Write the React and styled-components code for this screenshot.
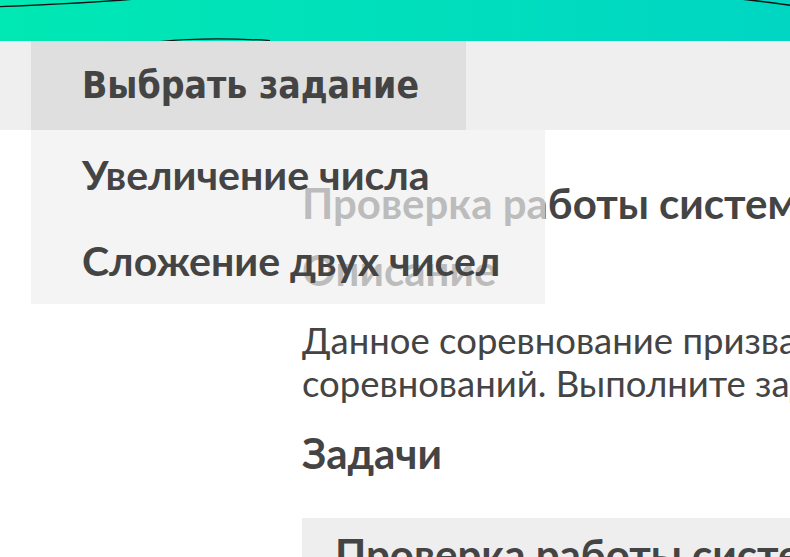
import React from 'react';
import styled, { createGlobalStyle } from 'styled-components';

const GlobalStyle = createGlobalStyle`
  html, body {
    margin: 0;
    padding: 0;
    overflow: hidden;
    background: #ffffff;
  }
  body {
    font-family: Lato, "Open Sans", "DejaVu Sans", sans-serif;
    color: #444444;
  }
`;

const Page = styled.div`
  position: relative;
  width: 1200px;
`;

const Header = styled.header`
  position: relative;
  height: 41px;
  background: linear-gradient(90deg, #00e8b3 0%, #00dcbf 45%, #00cdc9 100%);
  overflow: hidden;
`;

const Waves = styled.svg`
  position: absolute;
  left: 0;
  top: 0;
`;

const NavBar = styled.nav`
  position: relative;
  display: flex;
  height: 89px;
  padding-left: 31px;
  background: #efefef;
`;

const NavTab = styled.div`
  display: flex;
  align-items: center;
  width: 384px;
  padding-left: 51px;
  background: #dfdfdf;
  font-family: "DejaVu Sans Condensed", "DejaVu Sans", sans-serif;
  font-stretch: condensed;
  font-weight: 700;
  font-size: 37px;
  color: #444444;
`;

const Dropdown = styled.ul`
  position: absolute;
  top: 89px;
  left: 31px;
  z-index: 5;
  width: 514px;
  height: 174px;
  margin: 0;
  padding: 2px 0 0 51px;
  box-sizing: border-box;
  list-style: none;
  background: rgba(240, 240, 240, 0.7);
`;

const DropItem = styled.li`
  font-weight: 700;
  font-size: 41px;
  line-height: 86px;
  height: 86px;
  color: #444444;
  white-space: nowrap;
`;

const Main = styled.main`
  padding: 48px 0 0 302px;
  width: 900px;
`;

const Title = styled.h1`
  margin: 0;
  font-size: 42px;
  line-height: 50px;
  font-weight: 700;
  white-space: nowrap;
`;

const SectionTitle = styled.h2`
  margin: ${p => p.top}px 0 0;
  font-size: 42px;
  line-height: 50px;
  font-weight: 700;
`;

const Text = styled.p`
  margin: 24px 0 0;
  font-size: 36.5px;
  line-height: 43px;
  font-weight: 400;
  white-space: nowrap;
`;

const Task = styled.div`
  margin-top: 40px;
  padding: 11px 33px;
  background: #eeeeee;
  font-size: 42px;
  line-height: 50px;
  font-weight: 700;
  white-space: nowrap;
`;

const tasks = ['Увеличение числа', 'Сложение двух чисел'];

export default function App() {
  return (
    <Page>
      <GlobalStyle />
      <Header>
        <Waves width="1200" height="41" viewBox="0 0 1200 41">
          <path d="M-10 7 C 40 5, 90 3, 135 -1" stroke="#111" strokeWidth="1.4" fill="none" />
          <path d="M740 -1 C 760 1, 775 3, 795 6" stroke="#111" strokeWidth="1.4" fill="none" />
          <path d="M160 41.5 C 190 38.5, 235 38.5, 270 40.5" stroke="#111" strokeWidth="1.2" fill="none" />
        </Waves>
      </Header>
      <NavBar>
        <NavTab>Выбрать задание</NavTab>
        <Dropdown>
          {tasks.map(t => (
            <DropItem key={t}>{t}</DropItem>
          ))}
        </Dropdown>
      </NavBar>
      <Main>
        <Title>Проверка работы системы</Title>
        <SectionTitle top={17}>Описание</SectionTitle>
        <Text>
          Данное соревнование призвано проверить работу системы проведения
          <br />
          соревнований. Выполните задания, чтобы проверить систему.
        </Text>
        <SectionTitle top={23}>Задачи</SectionTitle>
        <Task>Проверка работы системы</Task>
      </Main>
    </Page>
  );
}
